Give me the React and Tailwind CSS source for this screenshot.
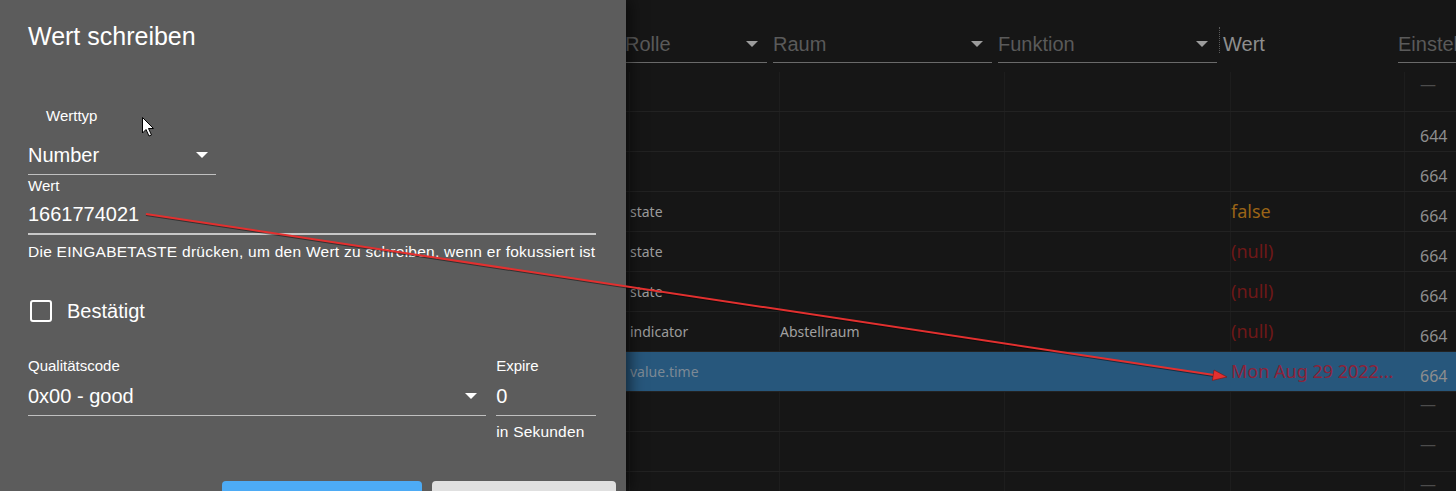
import React from 'react';

const rows = [
  { einst: '—' },
  { einst: '644' },
  { einst: '664' },
  { rolle: 'state', wert: 'false', wertCls: 'text-[#9a6417]', einst: '664' },
  { rolle: 'state', wert: '(null)', wertCls: 'text-[#6e1818]', einst: '664' },
  { rolle: 'state', wert: '(null)', wertCls: 'text-[#6e1818]', einst: '664' },
  { rolle: 'indicator', raum: 'Abstellraum', wert: '(null)', wertCls: 'text-[#6e1818]', einst: '664' },
  { rolle: 'value.time', wert: 'Mon Aug 29 2022...', wertCls: 'text-[#8c2239]', einst: '664', selected: true },
  { einst: '—' },
  { einst: '—' },
  { einst: '—' },
];

const DropArrow = ({ className }) => (
  <svg viewBox="7 10 10 5" width="12" height="6" className={className}>
    <path d="M7 10l5 5 5-5z" fill="currentColor" />
  </svg>
);

const FilterBox = ({ label, width, arrow = true }) => (
  <div className={`${width} shrink-0 flex items-center justify-between h-[24px] pb-[6px] box-content border-b border-[#6a6a6a] overflow-hidden whitespace-nowrap`}>
    <span className="text-[20px] leading-[24px] text-[#5a5a5a]">{label}</span>
    {arrow && <DropArrow className="text-[#9c9c9c] mr-[9px] shrink-0" />}
  </div>
);

const Row = ({ r }) => {
  const line = r.selected ? 'border-transparent' : 'border-[#1d1d1d]';
  return (
    <div className={`flex h-[40px] shrink-0 border-b border-[#222222] ${r.selected ? 'bg-[#27577c]' : ''}`}>
      <div className="w-[3px] shrink-0" />
      <div className={`w-[150px] shrink-0 border-l ${line} flex items-center text-[14px] ${r.selected ? 'text-[#7c8995]' : 'text-[#9b9b9b]'}`}>
        {r.rolle}
      </div>
      <div className={`w-[225px] shrink-0 border-l ${line} flex items-center text-[14px] text-[#a0a0a0]`}>
        {r.raum}
      </div>
      <div className={`w-[226px] shrink-0 border-l ${line}`} />
      <div className={`w-[174px] shrink-0 border-l ${line} flex items-center whitespace-nowrap overflow-hidden`}>
        {r.wert && <span className={`text-[18px] ${r.wertCls}`}>{r.wert}</span>}
      </div>
      <div className={`flex-1 border-l ${line} pl-[15px]`}>
        {r.einst === '—' ? (
          <div className="pt-[4px] text-[16px] leading-[16px] text-[#4c4c4c]">—</div>
        ) : (
          <div className="pt-[16px] text-[16px] leading-[16px] text-[#8e8e8e]">{r.einst}</div>
        )}
      </div>
    </div>
  );
};

export default function App() {
  return (
    <div className="relative flex w-[1456px] h-[491px] overflow-hidden bg-[#161616]">
      {/* dialog */}
      <div className="relative z-10 w-[626px] h-full shrink-0 bg-[#5c5c5c] text-white flex flex-col shadow-[4px_0_14px_rgba(0,0,0,0.55)] font-['Liberation_Sans',Arial,sans-serif]">
        <div className="pl-[28px] pr-[30px] flex flex-col">
          <h2 className="mt-[21px] text-[25px] leading-[30px] font-normal">Wert schreiben</h2>

          <label className="mt-[56px] ml-[18px] text-[15px] leading-[18px]">Werttyp</label>
          <div className="mt-[18px] w-[188px] flex items-center justify-between h-[24px] pb-[7px] box-content border-b border-[#c0c0c0]">
            <span className="text-[20px] leading-[24px]">Number</span>
            <DropArrow className="mr-[8px]" />
          </div>

          <label className="mt-[2px] text-[15px] leading-[18px]">Wert</label>
          <div className="mt-[7px] h-[24px] pb-[7px] box-content border-b-2 border-[#c8c8c8]">
            <span className="text-[20px] leading-[24px]">1661774021</span>
          </div>
          <p className="mt-[8px] text-[15.5px] leading-[18px] tracking-[0.26px] whitespace-nowrap">
            Die EINGABETASTE drücken, um den Wert zu schreiben, wenn er fokussiert ist
          </p>

          <div className="mt-[38px] flex items-center h-[24px]">
            <span className="ml-[2px] w-[22px] h-[22px] border-2 border-white rounded-[3px]" />
            <span className="ml-[15px] text-[20px] leading-[24px]">Bestätigt</span>
          </div>

          <div className="mt-[34px] flex gap-[10px]">
            <div className="w-[459px] flex flex-col">
              <label className="text-[15px] leading-[18px]">Qualitätscode</label>
              <div className="mt-[9px] flex items-center justify-between h-[24px] pb-[7px] box-content border-b border-[#c0c0c0]">
                <span className="text-[20px] leading-[24px]">0x00 - good</span>
                <DropArrow className="mr-[9px]" />
              </div>
            </div>
            <div className="w-[100px] flex flex-col">
              <label className="text-[15px] leading-[18px]">Expire</label>
              <div className="mt-[9px] h-[24px] pb-[7px] box-content border-b border-[#c0c0c0]">
                <span className="text-[20px] leading-[24px]">0</span>
              </div>
              <span className="mt-[7px] text-[15.5px] leading-[18px] tracking-[0.2px] whitespace-nowrap">in Sekunden</span>
            </div>
          </div>
        </div>

        <div className="mt-[40px] flex justify-end gap-[10px] pr-[10px]">
          <button className="w-[200px] h-[36px] rounded-[4px] bg-[#4dabf5]" />
          <button className="w-[184px] h-[36px] rounded-[4px] bg-[#e0e0e0]" />
        </div>
      </div>

      {/* table */}
      <div className="flex-1 flex flex-col min-w-0 font-['Noto_Sans',sans-serif]">
        <div className="h-[72px] shrink-0 flex items-start pt-[32px] font-['Liberation_Sans',Arial,sans-serif]">
          <div className="-ml-px">
            <FilterBox label="Rolle" width="w-[142px]" />
          </div>
          <div className="w-[6px] shrink-0" />
          <FilterBox label="Raum" width="w-[219px]" />
          <div className="w-[6px] shrink-0" />
          <FilterBox label="Funktion" width="w-[219px]" />
          <div className="w-[181px] shrink-0 flex items-start -mt-[5px]">
            <div className="ml-[2px] h-[26px] border-l border-dotted border-[#5a5a5a]" />
            <span className="ml-[3px] mt-[5px] text-[20px] leading-[24px] text-[#8e8e8e]">Wert</span>
          </div>
          <div className="flex-1 min-w-0">
            <FilterBox label="Einstellungen" width="w-full" arrow={false} />
          </div>
        </div>
        {rows.map((r, i) => (
          <Row key={i} r={r} />
        ))}
      </div>

      {/* annotation arrow + cursor */}
      <svg className="absolute inset-0 z-20 pointer-events-none" width="1456" height="491" viewBox="0 0 1456 491">
        <line x1="146" y1="215" x2="1214" y2="376" stroke="rgba(0,0,0,0.45)" strokeWidth="2" />
        <line x1="146" y1="214" x2="1214" y2="375" stroke="#e3302f" strokeWidth="2" />
        <polygon points="1227,377 1212.4,380.4 1214,370" fill="#e3302f" stroke="#7a1010" strokeWidth="0.6" />
        <path d="M142.5 117.5 L142.5 133 L146 129.5 L149 136 L151.5 135 L148.5 128.5 L153.5 128.5 Z" fill="#fff" stroke="#000" strokeWidth="1" />
      </svg>
    </div>
  );
}
